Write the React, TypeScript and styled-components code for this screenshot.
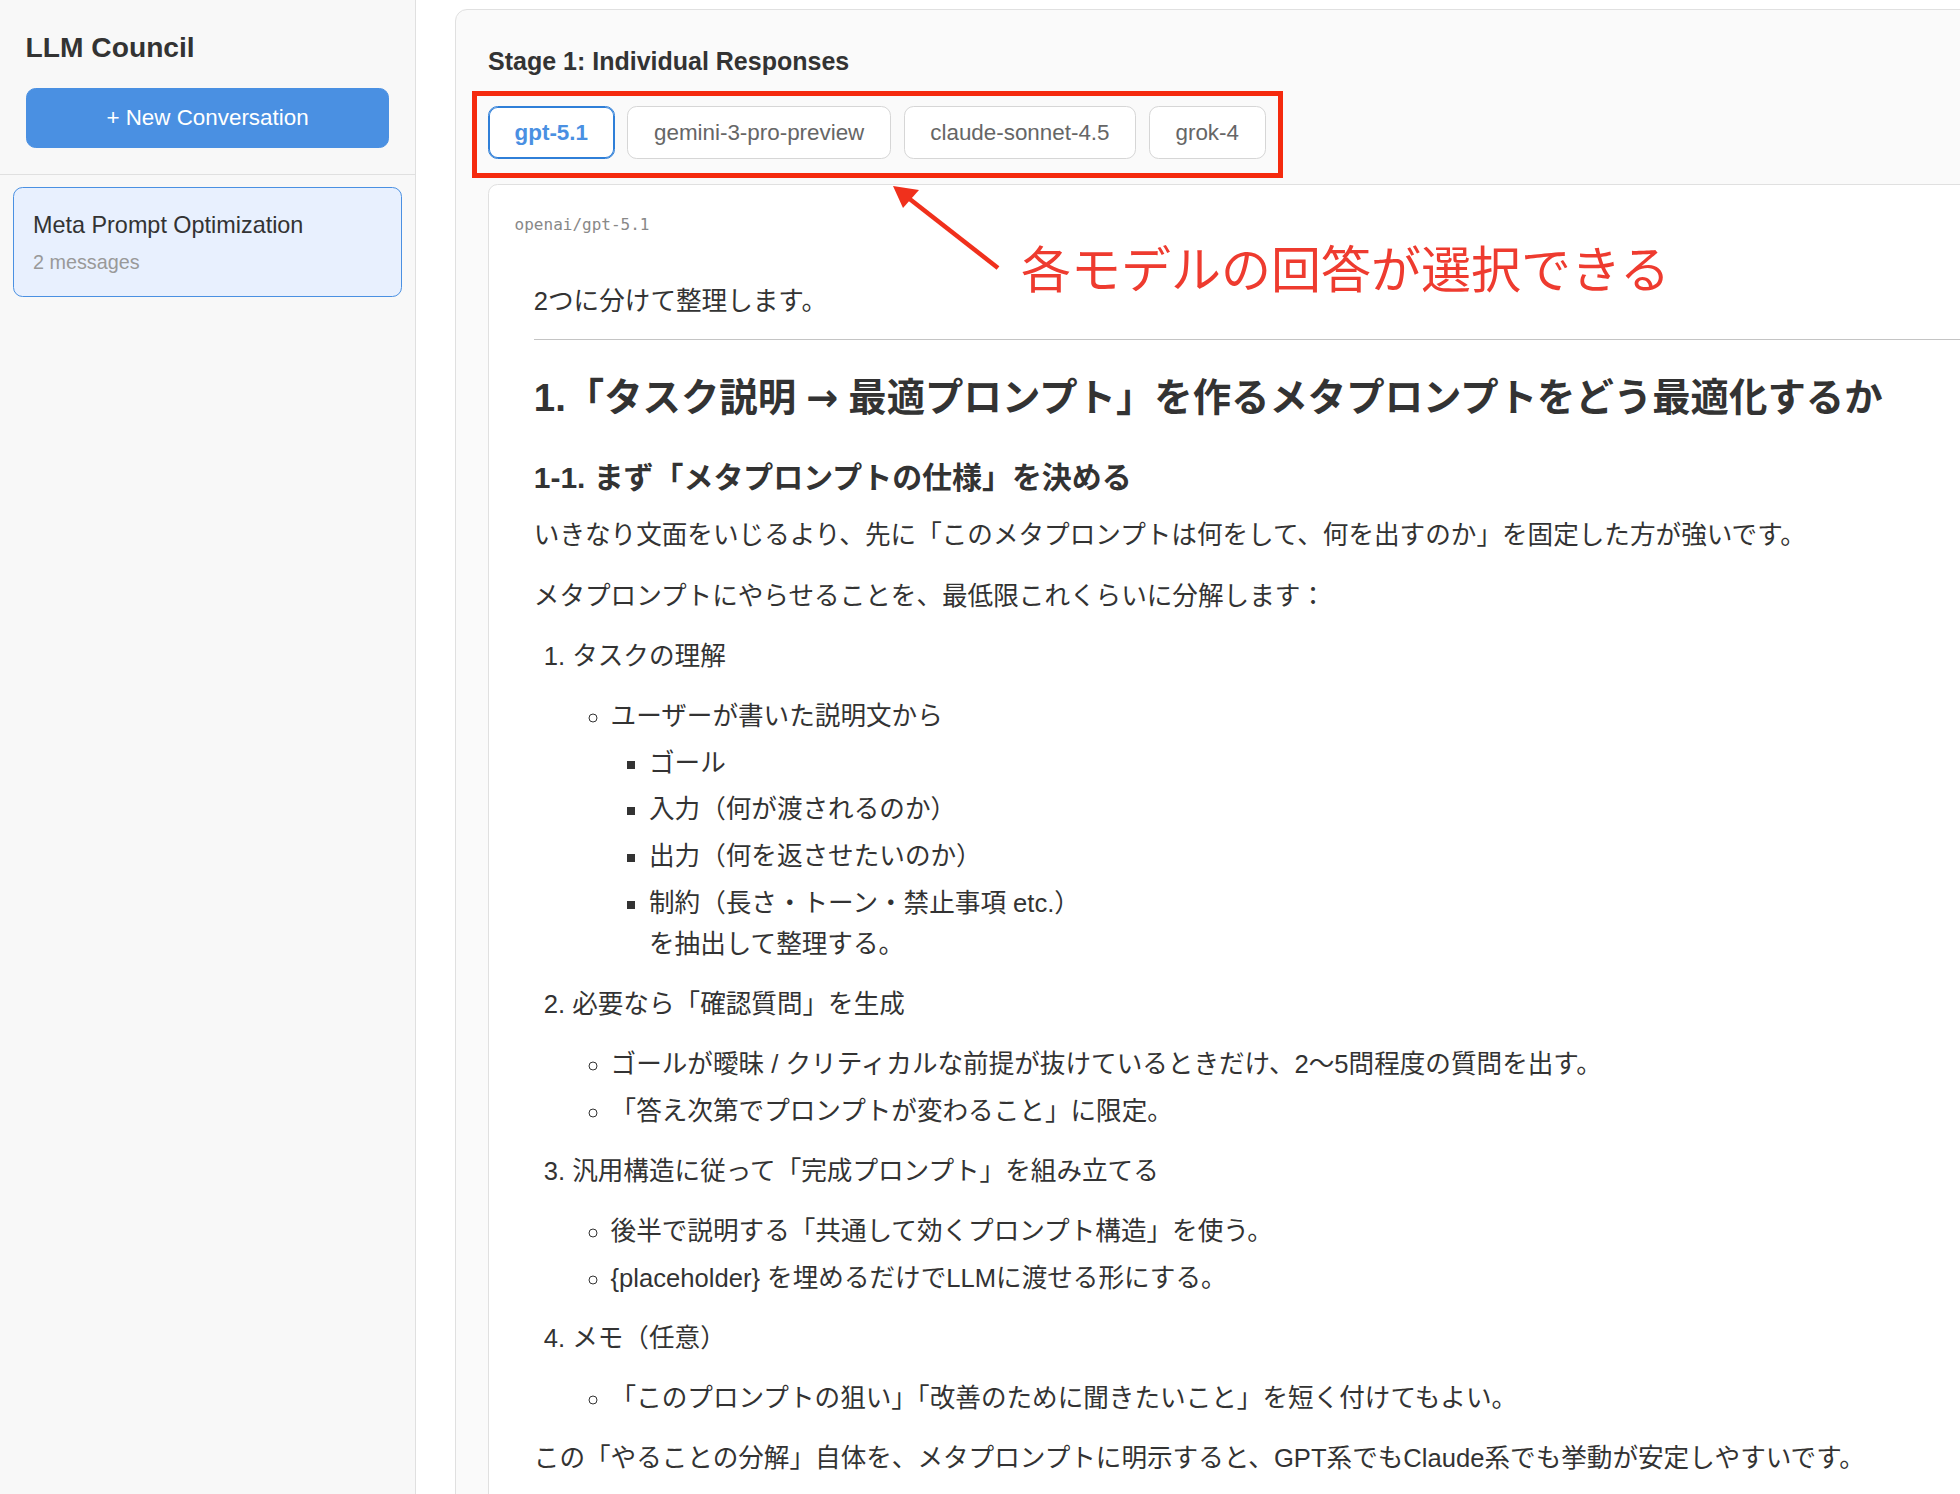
import React, { useState } from 'react'
import styled, { createGlobalStyle } from 'styled-components'

const SANS = `"Liberation Sans", "Noto Sans CJK JP", sans-serif`
const MONO = `"DejaVu Sans Mono", "Liberation Mono", monospace`

const GlobalStyle = createGlobalStyle`
  html, body {
    margin: 0;
    padding: 0;
    height: 100%;
    overflow: hidden;
    font-family: ${SANS};
    color: #333;
  }
  * {
    box-sizing: border-box;
  }
`

const Layout = styled.div`
  display: flex;
  width: 100vw;
  height: 100vh;
  overflow: hidden;
`

const Sidebar = styled.aside`
  flex: 0 0 416px;
  display: flex;
  flex-direction: column;
  background: #f8f8f8;
  border-right: 1px solid #e0e0e0;
`

const SidebarHeader = styled.div`
  padding: 25.6px;
  border-bottom: 1px solid #e0e0e0;

  h1 {
    margin: 0 0 19.2px;
    font-size: 28.2px;
    line-height: 43.2px;
    font-weight: 700;
    color: #333;
  }
`

const NewButton = styled.button`
  display: block;
  width: 100%;
  padding: 16px;
  border: 1px solid #4a90e2;
  border-radius: 9.6px;
  background: #4a90e2;
  color: #fff;
  font-family: ${SANS};
  font-size: 22.4px;
  line-height: 26px;
  cursor: pointer;
`

const ConversationList = styled.div`
  padding: 12.8px;
`

const ConversationItem = styled.div<{ $active?: boolean }>`
  padding: 19.2px;
  border-radius: 9.6px;
  border: 1px solid ${(p) => (p.$active ? '#4a90e2' : 'transparent')};
  background: ${(p) => (p.$active ? '#e8f0fe' : 'transparent')};
  cursor: pointer;
`

const ConversationTitle = styled.div`
  font-size: 23.4px;
  line-height: 34.6px;
  color: #333;
  margin-bottom: 5.4px;
`

const ConversationMeta = styled.div`
  font-size: 19.8px;
  line-height: 28.8px;
  color: #999;
`

const Main = styled.main`
  flex: 1;
  min-width: 0;
  overflow: hidden;
  background: #fff;
  padding: 9.3px 0 0 39px;
`

const Stage = styled.section`
  position: relative;
  width: 1640px;
  padding: 32px;
  background: #fafafa;
  border: 1px solid #e0e0e0;
  border-radius: 12px;
`

const StageTitle = styled.h3`
  margin: 0 0 25.6px;
  font-size: 25px;
  line-height: 38.4px;
  font-weight: 700;
  color: #333;
`

const Tabs = styled.div`
  display: flex;
  gap: 12.8px;
  margin-bottom: 25.6px;
`

const Tab = styled.button<{ $active?: boolean }>`
  padding: 12.8px 25.6px;
  background: #fff;
  border: 1px solid ${(p) => (p.$active ? '#2f7fd8' : '#d6d6d6')};
  box-shadow: ${(p) => (p.$active ? 'inset 0 0 0 1px #2f7fd8' : 'none')};
  border-radius: 9.6px;
  font-family: ${SANS};
  font-size: 22.4px;
  line-height: 25px;
  font-weight: ${(p) => (p.$active ? 700 : 400)};
  color: ${(p) => (p.$active ? '#4a90e2' : '#666')};
  cursor: pointer;
`

const TabContent = styled.div`
  background: #fff;
  padding: 25.6px;
  border: 1px solid #e0e0e0;
  border-radius: 9.6px;
  min-height: 1400px;
`

const ModelName = styled.div`
  font-family: ${MONO};
  font-size: 16px;
  line-height: 28px;
  color: #888;
  margin-bottom: 23px;
`

const Markdown = styled.div`
  padding: 19.2px;
  font-size: 25.6px;
  line-height: 1.6;
  color: #333;
  white-space: nowrap;

  p {
    margin: 0 0 19.2px;
  }

  hr {
    height: 0;
    border: none;
    border-top: 1.5px solid #c4c4c4;
    margin: -2.5px 0 0;
  }

  h2 {
    margin: 31.3px 0 32px;
    font-size: 38.4px;
    line-height: 1.4;
    font-weight: 700;
  }

  h3 {
    margin: 0 0 16.5px;
    font-size: 29.95px;
    line-height: 1.4;
    font-weight: 700;
  }

  ol {
    margin: 19px 0;
    padding-left: 38.4px;
  }

  ol > li > ul {
    margin: 19px 0;
    padding-left: 38.4px;
  }

  ul ul {
    margin: 0;
    padding-left: 38.4px;
  }

  li {
    margin: 6px 0;
  }
`

const ArrowGlyph = styled.span`
  font-family: "DejaVu Sans", sans-serif;
  font-weight: 700;
  margin: 0 10px;
`

const Callout = styled.div`
  position: absolute;
  left: 16px;
  top: 80.7px;
  width: 811px;
  height: 87px;
  border: 5.5px solid #f52a0e;
  pointer-events: none;
`

const ArrowMark = styled.svg`
  position: absolute;
  left: 424px;
  top: 165px;
  width: 130px;
  height: 110px;
  overflow: visible;
  pointer-events: none;
`

const CalloutText = styled.div`
  position: absolute;
  left: 565px;
  top: 231px;
  font-family: "Noto Sans CJK JP", sans-serif;
  font-size: 50px;
  line-height: 50px;
  color: #ee3b2f;
  white-space: nowrap;
  pointer-events: none;
`

const models = ['gpt-5.1', 'gemini-3-pro-preview', 'claude-sonnet-4.5', 'grok-4']

export default function App() {
  const [active, setActive] = useState(0)

  return (
    <>
      <GlobalStyle />
      <Layout>
        <Sidebar>
          <SidebarHeader>
            <h1>LLM Council</h1>
            <NewButton>+ New Conversation</NewButton>
          </SidebarHeader>
          <ConversationList>
            <ConversationItem $active>
              <ConversationTitle>Meta Prompt Optimization</ConversationTitle>
              <ConversationMeta>2 messages</ConversationMeta>
            </ConversationItem>
          </ConversationList>
        </Sidebar>

        <Main>
          <Stage>
            <StageTitle>Stage 1: Individual Responses</StageTitle>
            <Tabs>
              {models.map((m, i) => (
                <Tab key={m} $active={i === active} onClick={() => setActive(i)}>
                  {m}
                </Tab>
              ))}
            </Tabs>

            <TabContent>
              <ModelName>openai/{models[active]}</ModelName>
              <Markdown>
                <p>2つに分けて整理します。</p>
                <hr />
                <h2>
                  1.「タスク説明<ArrowGlyph>→</ArrowGlyph>最適プロンプト」を作るメタプロンプトをどう最適化するか
                </h2>
                <h3>1-1. まず「メタプロンプトの仕様」を決める</h3>
                <p>いきなり文面をいじるより、先に「このメタプロンプトは何をして、何を出すのか」を固定した方が強いです。</p>
                <p>メタプロンプトにやらせることを、最低限これくらいに分解します：</p>
                <ol>
                  <li>
                    タスクの理解
                    <ul>
                      <li>
                        ユーザーが書いた説明文から
                        <ul>
                          <li>ゴール</li>
                          <li>入力（何が渡されるのか）</li>
                          <li>出力（何を返させたいのか）</li>
                          <li>
                            制約（長さ・トーン・禁止事項 etc.）
                            <br />
                            を抽出して整理する。
                          </li>
                        </ul>
                      </li>
                    </ul>
                  </li>
                  <li>
                    必要なら「確認質問」を生成
                    <ul>
                      <li>ゴールが曖昧 / クリティカルな前提が抜けているときだけ、2〜5問程度の質問を出す。</li>
                      <li>「答え次第でプロンプトが変わること」に限定。</li>
                    </ul>
                  </li>
                  <li>
                    汎用構造に従って「完成プロンプト」を組み立てる
                    <ul>
                      <li>後半で説明する「共通して効くプロンプト構造」を使う。</li>
                      <li>{'{placeholder}'} を埋めるだけでLLMに渡せる形にする。</li>
                    </ul>
                  </li>
                  <li>
                    メモ（任意）
                    <ul>
                      <li>「このプロンプトの狙い」「改善のために聞きたいこと」を短く付けてもよい。</li>
                    </ul>
                  </li>
                </ol>
                <p>この「やることの分解」自体を、メタプロンプトに明示すると、GPT系でもClaude系でも挙動が安定しやすいです。</p>
              </Markdown>
            </TabContent>

            <Callout />
            <ArrowMark viewBox="0 0 130 110">
              <line x1="118" y1="93" x2="22" y2="18" stroke="#f0301c" strokeWidth="4.5" />
              <polygon points="13,11 39,15 23,33" fill="#f0301c" />
            </ArrowMark>
            <CalloutText>各モデルの回答が選択できる</CalloutText>
          </Stage>
        </Main>
      </Layout>
    </>
  )
}
